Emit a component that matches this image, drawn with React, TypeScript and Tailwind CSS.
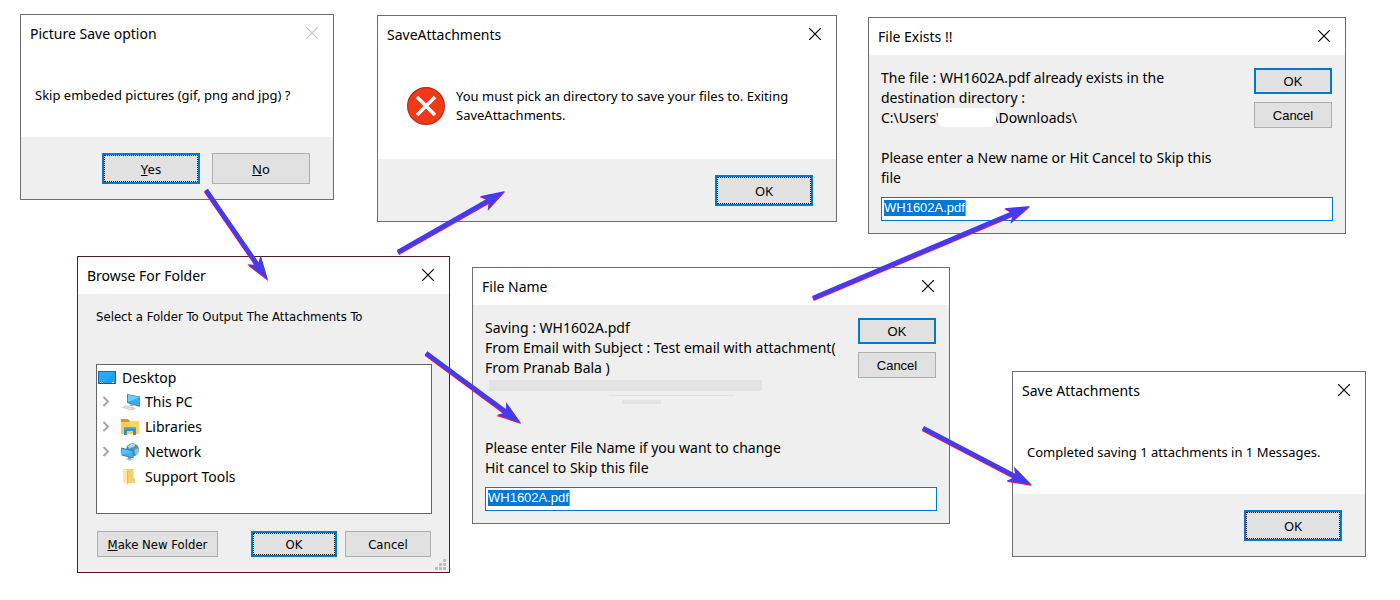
import type { ReactNode } from 'react';
import clsx from 'clsx';

type DialogProps = {
  title: string;
  className: string;
  closeDisabled?: boolean;
  children: ReactNode;
}

const Dialog = ({ title, className, closeDisabled, children }: DialogProps) => {
  return (
    <section aria-label={title} className={clsx('absolute flex flex-col border bg-white', className)}>
      <header className="flex h-[37px] shrink-0 items-center justify-between pr-[15px] pl-[9px]">
        <h2 className="text-[14px] leading-5">{title}</h2>
        <button
          type="button"
          aria-label={'Close ' + title}
          disabled={closeDisabled}
          className={clsx('mb-px', closeDisabled ? 'text-[#c4c4c4]' : 'text-black')}>
          <svg className="block" width="12" height="12" viewBox="0 0 12 12" stroke="currentColor" strokeWidth="1.2">
            <path d="M0 0L12 12M12 0L0 12" />
          </svg>
        </button>
      </header>
      {children}
    </section>
  );
};

type ButtonProps = {
  children: ReactNode;
  className: string;
  primary?: boolean;
  focused?: boolean;
}

const Button = ({ children, className, primary, focused }: ButtonProps) => {
  return (
    <button
      type="button"
      className={clsx(
        'bg-[#e1e1e1] text-center',
        primary ? 'border-2 border-[#0078d7]' : 'border border-[#adadad]',
        focused && 'outline-1 -outline-offset-3 outline-black outline-dotted',
        className
      )}>
      {children}
    </button>
  );
};

const Footer = ({ children }: { children: ReactNode }) => {
  return (
    <footer className="flex justify-end gap-3 bg-[#efefef] pt-4 pr-[23px] pb-[15px]">
      {children}
    </footer>
  );
};

type PromptProps = {
  id: string;
  children: ReactNode;
}

const Prompt = ({ id, children }: PromptProps) => {
  return (
    <form className="flex grow flex-col gap-[9px] bg-[#efefef] px-3 pt-[13px] pb-3">
      <div className="flex justify-between">
        <label htmlFor={id} className="text-[14px] leading-5 whitespace-nowrap">
          {children}
        </label>
        <div className="mr-px flex flex-col gap-2 font-['Liberation_Sans',sans-serif] text-[13px]">
          <Button primary className="h-[26px] w-[78px] pt-px">OK</Button>
          <Button className="h-[26px] w-[78px] pt-px">Cancel</Button>
        </div>
      </div>
      <div className="flex h-6 items-start border border-[#0078d7] bg-white p-0.5">
        <input
          id={id}
          type="text"
          defaultValue="WH1602A.pdf"
          className="field-sizing-content h-4 border-r border-[#ff8728] bg-[#0078d7] font-['Liberation_Sans',sans-serif] text-[13px] leading-4 text-white outline-none" />
      </div>
    </form>
  );
};

const DesktopIcon = () => (
  <svg className="mt-0.5" width="18" height="14" viewBox="0 0 18 14">
    <rect x="0.5" y="0.5" width="17" height="12" fill="#1ba1fb" stroke="#0a6ebd" />
    <path d="M1 1H17L5 12H1Z" fill="#35aefd" opacity="0.5" />
    <path d="M1 12.5H17" stroke="#0b5c9e" />
    <path d="M2 11.5H3M4 11.5H5M14 11.5H16" stroke="#fff" />
  </svg>
);

const PcIcon = () => (
  <svg width="19" height="18" viewBox="0 0 19 18">
    <path d="M6 1L19 3.500V14L6 10Z" fill="#5f7f96" />
    <path d="M7 2L18.500 4.200V12.600L7 9Z" fill="#35b0f5" />
    <path d="M7 2L18.500 4.200L7 9Z" fill="#6fcbfa" />
    <path d="M10 11L13 12L12 13.500L8 12.500Z" fill="#9aa8b2" />
    <path d="M0 14.500L5 12.500L15 15L11 17.500Z" fill="#c3cacf" />
    <path d="M2 14.500L5 13.400L12 15.200L10 16.500Z" fill="#dfe4e7" />
  </svg>
);

const LibrariesIcon = () => (
  <svg width="19" height="16" viewBox="0 0 19 16">
    <path d="M0 0H7L9 2V5H0Z" fill="#dc9a00" />
    <path d="M0 3H8L9.500 2H18V15H0Z" fill="#ffd35c" />
    <path d="M0 15V3H5L18 15Z" fill="#ffc83c" opacity="0.5" />
    <path d="M3 8H15V16H12V12H6V16H3Z" fill="#3a8ed2" />
    <path d="M3 8H15V9.500H3Z" fill="#5badea" />
  </svg>
);

const NetworkIcon = () => (
  <svg width="19" height="18" viewBox="0 0 19 18">
    <circle cx="11.500" cy="6.800" r="6.600" fill="#4f8fb0" />
    <path d="M7 3C9 0.500 13 0.500 14.500 1.500L13 4L10 4.500L8 6Z" fill="#b5d9e5" />
    <path d="M14 6L18 5.500C18.500 8 17.500 11 15 12.500L13.500 9Z" fill="#8fc4d8" />
    <path d="M5 16L8 14.500L12 16.500L8 18Z" fill="#b8c1c7" />
    <path d="M7 13L10 13V16H7Z" fill="#8d9aa3" />
    <path d="M0 4.500L12.500 7.500V15.500L0.500 12.500Z" fill="#2a7dbd" />
    <path d="M1 5.700L11.800 8.400V14.400L1.200 11.700Z" fill="#38b2fa" />
    <path d="M1 5.700L11.800 8.400L1.200 11.700Z" fill="#5cc0fb" />
  </svg>
);

const FolderIcon = () => (
  <svg width="19" height="17" viewBox="0 0 19 17">
    <path d="M4 1H12.500V10L14 11V15H4Z" fill="#f3cf6e" />
    <path d="M2 0.500L6 2.500V17L2 14.500Z" fill="#ffe9a6" />
    <path d="M6 2.500V17L7 15V3Z" fill="#e5bb52" />
  </svg>
);

const ErrorIcon = () => (
  <svg className="shrink-0" width="38" height="38" viewBox="0 0 38 38">
    <circle cx="19" cy="19" r="18.400" fill="#f03a17" stroke="#b3301a" strokeWidth="1.200" />
    <path d="M10 10L28 28M28 10L10 28" stroke="#fff" strokeWidth="3.600" />
  </svg>
);

const folders = [
  { name: 'This PC', icon: <PcIcon />, expandable: true },
  { name: 'Libraries', icon: <LibrariesIcon />, expandable: true },
  { name: 'Network', icon: <NetworkIcon />, expandable: true },
  { name: 'Support Tools', icon: <FolderIcon />, expandable: false },
];

const FolderTree = () => {
  return (
    <ul className="mr-[17px] ml-[18px] h-[150px] border border-[#646464] bg-white text-[14px]">
      <li>
        <div className="flex h-6 items-center gap-1.5 pl-px">
          <DesktopIcon />
          Desktop
        </div>
        <ul>
          {folders.map((folder) => (
            <li key={folder.name} className="flex h-[25px] items-center pl-[5px]">
              <span className="w-[19px]">
                {folder.expandable && (
                  <svg width="8" height="11" viewBox="0 0 8 11" fill="none" stroke="#a6a6a6" strokeWidth="2">
                    <path d="M1.500 1L6 5.500L1.500 10" />
                  </svg>
                )}
              </span>
              {folder.icon}
              <span className="ml-[5px]">{folder.name}</span>
            </li>
          ))}
        </ul>
      </li>
    </ul>
  );
};

const arrows = [
  { x1: 206, y1: 190, x2: 268, y2: 280 },
  { x1: 398, y1: 252, x2: 505, y2: 191 },
  { x1: 813, y1: 298, x2: 1030, y2: 206 },
  { x1: 426, y1: 353, x2: 521, y2: 423 },
  { x1: 923, y1: 428, x2: 1032, y2: 485 },
];

const Arrows = () => {
  const shapes = arrows.map(({ x1, y1, x2, y2 }) => {
    const length = Math.hypot(x2 - x1, y2 - y1);
    const angle = Math.atan2(y2 - y1, x2 - x1) * 180 / Math.PI;
    return (
      <path
        key={x1}
        transform={`translate(${x2} ${y2}) rotate(${angle})`}
        d={`M${-length} -2.300H-20L-24.500 -8L0 0L-24.500 8L-20 2.300H${-length}Z`} />
    );
  });

  return (
    <svg className="pointer-events-none absolute top-0 left-0 overflow-visible" width="1400" height="600" aria-hidden="true">
      <g fill="#ed1c3c" transform="translate(0 1)">{shapes}</g>
      <g fill="#443af2">{shapes}</g>
    </svg>
  );
};

const App = () => {
  return (
    <main className="relative min-h-screen overflow-hidden bg-white font-['Noto_Sans','Open_Sans',sans-serif] text-black">
      <Dialog title="Picture Save option" closeDisabled className="top-[14px] left-[20px] w-[314px] border-[#6e6e6e]">
        <p className="pt-[34px] pb-8 pl-[14px] text-[13px] leading-[19px]">
          Skip embeded pictures (gif, png and jpg) ?
        </p>
        <Footer>
          <Button primary focused className="h-[31px] w-[98px] pt-0.5 text-[13px]"><u>Y</u>es</Button>
          <Button className="h-[31px] w-[98px] pt-0.5 text-[13px]"><u>N</u>o</Button>
        </Footer>
      </Dialog>

      <Dialog title="SaveAttachments" className="top-[15px] left-[377px] w-[460px] border-[#6e6e6e]">
        <div className="flex items-center gap-[11px] py-[34px] pl-[29px]">
          <ErrorIcon />
          <p className="text-[13px] leading-[19px]">
            You must pick an directory to save your files to. Exiting<br />
            SaveAttachments.
          </p>
        </div>
        <Footer>
          <Button primary focused className="h-[31px] w-[98px] pt-0.5 text-[13px]">OK</Button>
        </Footer>
      </Dialog>

      <Dialog title="File Exists !!" className="top-[17px] left-[868px] w-[478px] border-[#6e6e6e]">
        <Prompt id="new-name">
          The file : WH1602A.pdf already exists in the<br />
          destination directory :<br />
          C:\Users\<span className="relative -mx-[3px] inline-block h-[19px] w-[58px] rounded-md bg-white align-top" />\Downloads\<br />
          <br />
          Please enter a New name or Hit Cancel to Skip this<br />
          file
        </Prompt>
      </Dialog>

      <Dialog title="Browse For Folder" className="top-[256px] left-[77px] w-[373px] border-[#4f1c20]">
        <div className="relative bg-[#efefef] pt-[13px] pb-[15px] font-['DejaVu_Sans_Condensed','DejaVu_Sans',sans-serif] text-[13px]">
          <p className="mb-[37px] pl-[18px] leading-5">Select a Folder To Output The Attachments To</p>
          <div className="font-['Noto_Sans','Open_Sans',sans-serif]">
            <FolderTree />
          </div>
          <div className="mt-[17px] mr-[18px] ml-[19px] flex gap-2">
            <Button className="mr-auto h-[26px] w-[121px] pt-px"><u>M</u>ake New Folder</Button>
            <Button primary focused className="h-[26px] w-[86px] pt-px">OK</Button>
            <Button className="h-[26px] w-[86px] pt-px">Cancel</Button>
          </div>
          <svg className="absolute right-[3px] bottom-0.5" width="11" height="11" viewBox="0 0 11 11" fill="#bfbfbf">
            <path d="M8 0h3v3h-3zM4 4h3v3h-3zM8 4h3v3h-3zM0 8h3v3h-3zM4 8h3v3h-3zM8 8h3v3h-3z" />
          </svg>
        </div>
      </Dialog>

      <Dialog title="File Name" className="top-[267px] left-[472px] w-[478px] border-[#6e6e6e]">
        <Prompt id="file-name">
          Saving : WH1602A.pdf<br />
          From Email with Subject : Test email with attachment(<br />
          From Pranab Bala )
          <span className="flex h-[60px] flex-col gap-1 pt-0.5 pl-1">
            <span className="h-[11px] w-[273px] bg-[#e3e3e3]" />
            <span className="ml-[120px] h-px w-[125px] bg-[#e3e3e3]" />
            <span className="ml-[133px] h-1 w-[39px] bg-[#e3e3e3]" />
          </span>
          Please enter File Name if you want to change<br />
          Hit cancel to Skip this file
        </Prompt>
      </Dialog>

      <Dialog title="Save Attachments" className="top-[371px] left-[1012px] w-[354px] border-[#6e6e6e]">
        <p className="pt-[34px] pb-8 pl-[14px] text-[13px] leading-[19px]">
          Completed saving 1 attachments in 1 Messages.
        </p>
        <Footer>
          <Button primary focused className="h-[31px] w-[98px] pt-0.5 text-[13px]">OK</Button>
        </Footer>
      </Dialog>

      <Arrows />
    </main>
  );
};

export default App;
